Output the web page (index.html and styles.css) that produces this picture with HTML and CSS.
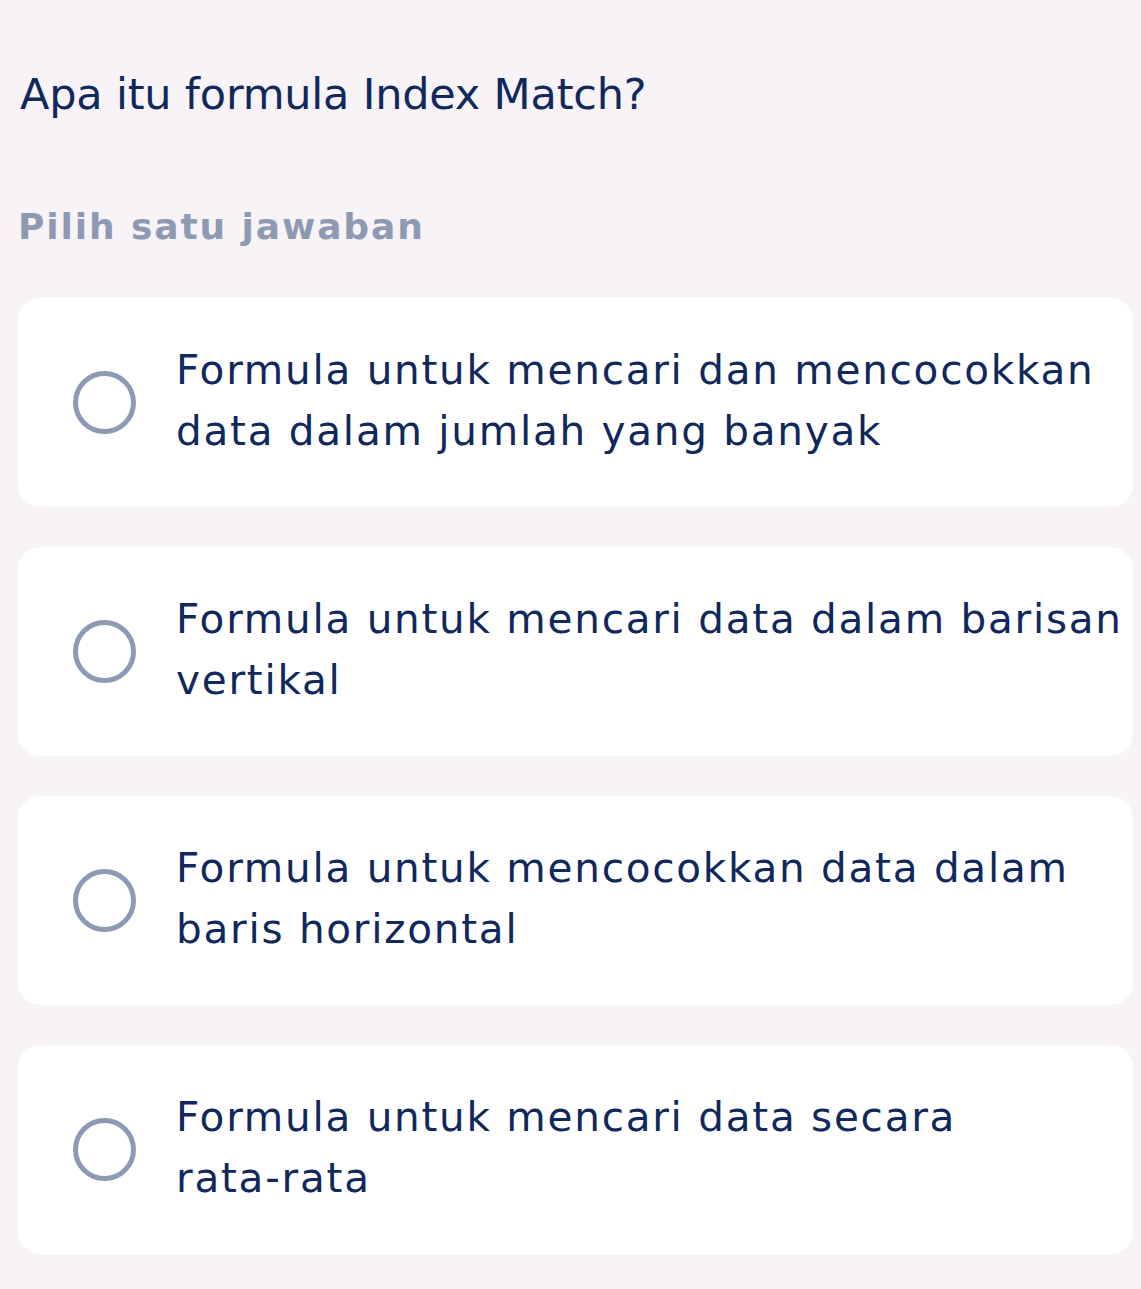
FILE: index.html
```html
<!doctype html>
<html>
<head>
    <title>Kuis</title>
    <meta charset="utf-8" />
    <meta name="viewport" content="width=device-width, initial-scale=1" />
    <link rel="stylesheet" href="styles.css">
</head>
<body>
<div class="quiz">
    <h1 class="question">Apa itu formula Index Match?</h1>
    <h3 class="hint">Pilih satu jawaban</h3>

    <div class="options">
        <label class="option">
            <span class="radio"></span>
            <span class="answer">Formula untuk mencari dan mencocokkan<br>data dalam jumlah yang banyak</span>
        </label>
        <label class="option">
            <span class="radio"></span>
            <span class="answer">Formula untuk mencari data dalam barisan<br>vertikal</span>
        </label>
        <label class="option">
            <span class="radio"></span>
            <span class="answer">Formula untuk mencocokkan data dalam<br>baris horizontal</span>
        </label>
        <label class="option">
            <span class="radio"></span>
            <span class="answer">Formula untuk mencari data secara<br>rata-rata</span>
        </label>
    </div>
</div>
</body>
</html>
```

FILE: styles.css
```css
html {
    background: #f7f3f6;
}
body {
    margin: 0;
    font-family: "DejaVu Sans", "Open Sans", sans-serif;
    color: #10285b;
}
.quiz {
    padding: 64px 8px 0 18px;
}
.question {
    margin: 0 0 0 2px;
    font-size: 43px;
    font-weight: 400;
    line-height: 60px;
    letter-spacing: -0.2px;
}
.hint {
    margin: 78px 0 0 0;
    font-size: 36px;
    font-weight: 700;
    line-height: 50px;
    letter-spacing: 1.9px;
    color: #8e9ab3;
}
.options {
    display: flex;
    flex-direction: column;
    gap: 40px;
    margin-top: 46px;
}
.option {
    display: flex;
    align-items: center;
    height: 209px;
    box-sizing: border-box;
    background: #ffffff;
    border-radius: 22px;
}
.radio {
    flex: none;
    width: 53px;
    height: 53px;
    margin: 0 40px 0 55px;
    border: 5.5px solid #8e9ab3;
    border-radius: 50%;
}
.answer {
    margin-bottom: 3px;
    font-size: 40.5px;
    line-height: 61px;
    letter-spacing: 1.75px;
    white-space: nowrap;
}
```
